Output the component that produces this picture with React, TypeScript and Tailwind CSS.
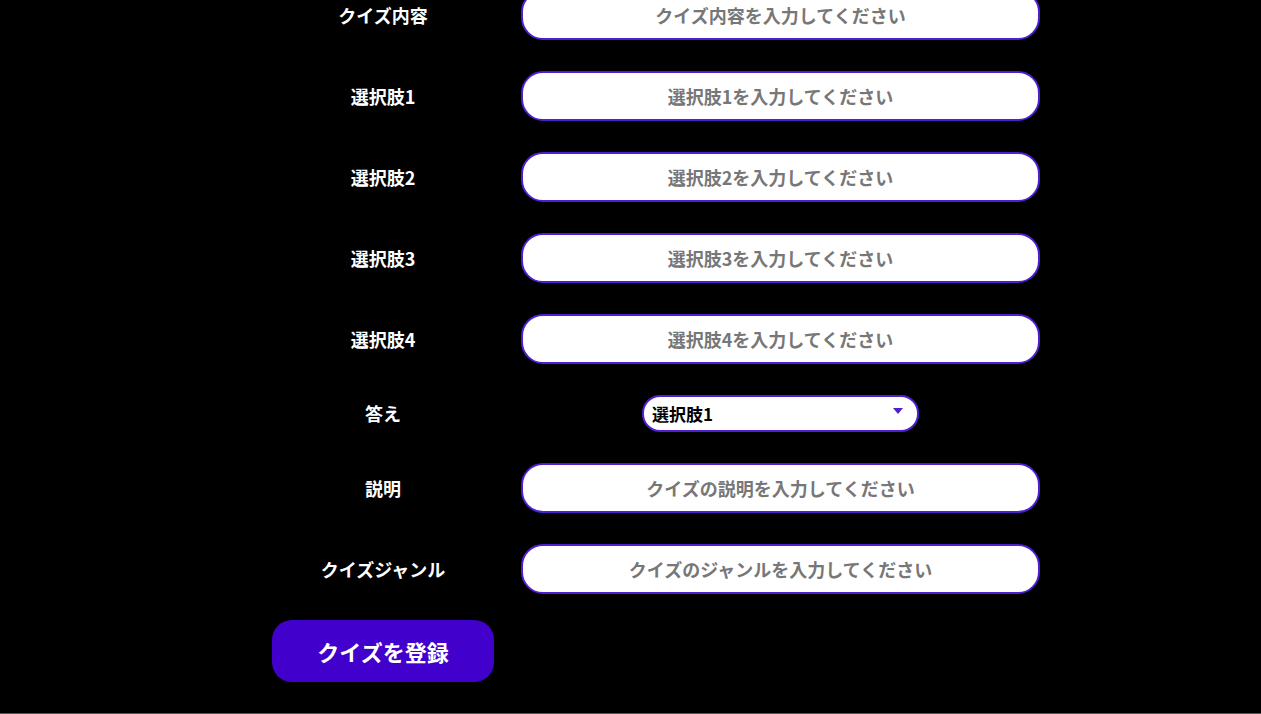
const fields = [
  { label: "クイズ内容", placeholder: "クイズ内容を入力してください" },
  { label: "選択肢1", placeholder: "選択肢1を入力してください" },
  { label: "選択肢2", placeholder: "選択肢2を入力してください" },
  { label: "選択肢3", placeholder: "選択肢3を入力してください" },
  { label: "選択肢4", placeholder: "選択肢4を入力してください" },
];

const tailFields = [
  { label: "説明", placeholder: "クイズの説明を入力してください" },
  { label: "クイズジャンル", placeholder: "クイズのジャンルを入力してください" },
];

function Label({ children }: { children: React.ReactNode }) {
  return (
    <div className="flex items-center justify-center text-[18px] font-bold text-white">
      {children}
    </div>
  );
}

function TextField({ placeholder }: { placeholder: string }) {
  return (
    <input
      type="text"
      placeholder={placeholder}
      className="h-[50px] w-[519px] rounded-[22px] border-2 border-[#4f1fd0] bg-white px-4 text-center text-[18px] font-bold text-black outline-none placeholder:text-[#777]"
    />
  );
}

export default function App() {
  return (
    <div
      className="min-h-[714px] overflow-hidden border-b border-[#555] bg-black"
      style={{ fontFamily: '"Noto Sans CJK JP", "Noto Sans", sans-serif' }}
    >
      <div className="-mt-[10px] pl-[272px]">
        <div className="grid grid-cols-[222px_519px] gap-x-[27px] gap-y-[31px]">
          {fields.map((f) => (
            <div key={f.label} className="contents">
              <Label>{f.label}</Label>
              <TextField placeholder={f.placeholder} />
            </div>
          ))}

          {/* answer select */}
          <Label>答え</Label>
          <div className="flex justify-center">
            <div className="flex h-[37px] w-[277px] items-center justify-between rounded-[18px] border-2 border-[#4f1fd0] bg-white pl-[8px] pr-[14px]">
              <span className="text-[17px] font-bold text-black">選択肢1</span>
              <svg width="10" height="6" viewBox="0 0 10 6" className="-mt-[6px]">
                <path d="M0 0h10L5 6z" fill="#4f1fd0" />
              </svg>
            </div>
          </div>

          {tailFields.map((f) => (
            <div key={f.label} className="contents">
              <Label>{f.label}</Label>
              <TextField placeholder={f.placeholder} />
            </div>
          ))}
        </div>

        <button className="mt-[26px] h-[62px] w-[222px] rounded-[20px] bg-[#4200cc] text-[22px] font-bold text-white">
          クイズを登録
        </button>
      </div>
    </div>
  );
}
